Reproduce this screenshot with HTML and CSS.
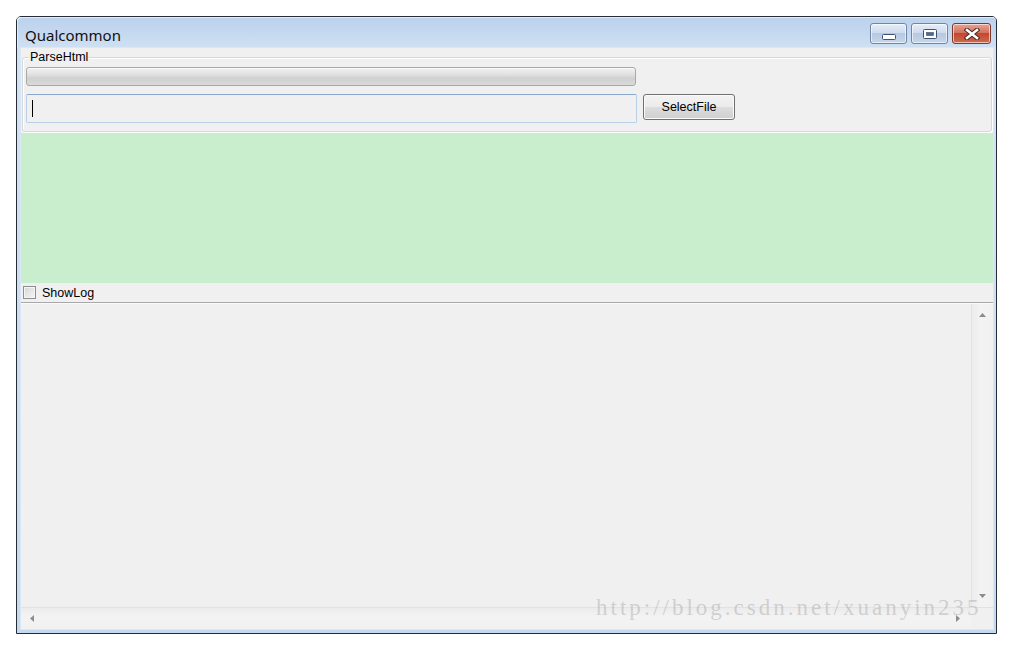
FILE: index.html
```html
<!DOCTYPE html>
<html>
<head>
<meta charset="utf-8">
<title>Qualcommon</title>
<link rel="stylesheet" href="styles.css">
</head>
<body>
<div class="window">
  <div class="titlebar">
    <span class="title">Qualcommon</span>
    <div class="caption-btns">
      <div class="cap cap-min">
        <svg width="14" height="6" viewBox="0 0 14 6"><rect x="0.5" y="0.5" width="13" height="5" rx="1" fill="#fff" stroke="#3d5272"/></svg>
      </div>
      <div class="cap cap-max">
        <svg width="14" height="10" viewBox="0 0 14 10"><rect x="0.5" y="0.5" width="13" height="9" rx="1" fill="#fff" stroke="#3d5272"/><rect x="3.5" y="3.5" width="7" height="3" fill="#50688a" stroke="#3d5272" stroke-width="0.6"/></svg>
      </div>
      <div class="cap cap-close">
        <svg width="16" height="12" viewBox="0 0 16 12"><path d="M3 2 L13 10 M13 2 L3 10" stroke="#4a2a25" stroke-width="4.6" stroke-linecap="square"/><path d="M3 2 L13 10 M13 2 L3 10" stroke="#fff" stroke-width="2.6" stroke-linecap="square"/></svg>
      </div>
    </div>
  </div>
  <div class="frame">
    <div class="client">
      <div class="group">
        <span class="group-label">ParseHtml</span>
        <div class="progress"></div>
        <div class="file-row">
          <div class="input"><span class="caret"></span></div>
          <button class="btn">SelectFile</button>
        </div>
      </div>
      <div class="green"></div>
      <div class="check-row">
        <span class="checkbox"></span>
        <span class="check-label">ShowLog</span>
      </div>
      <div class="log">
        <div class="log-main">
          <div class="log-text"></div>
          <div class="vscroll">
            <svg class="arrow" width="7" height="4" viewBox="0 0 7 4"><path d="M0 4 L3.5 0 L7 4 Z" fill="#8c8c8c"/></svg>
            <svg class="arrow" width="7" height="4" viewBox="0 0 7 4"><path d="M0 0 L7 0 L3.5 4 Z" fill="#8c8c8c"/></svg>
          </div>
        </div>
        <div class="hscroll-row">
          <div class="hscroll">
            <svg class="arrow" width="4" height="7" viewBox="0 0 4 7"><path d="M4 0 L4 7 L0 3.5 Z" fill="#8c8c8c"/></svg>
            <svg class="arrow" width="4" height="7" viewBox="0 0 4 7"><path d="M0 0 L4 3.5 L0 7 Z" fill="#8c8c8c"/></svg>
          </div>
          <div class="corner"></div>
        </div>
      </div>
    </div>
  </div>
</div>
<div class="watermark">http://blog.csdn.net/xuanyin235</div>
</body>
</html>
```

FILE: styles.css
```css
html, body {
  margin: 0;
  padding: 0;
  background: #ffffff;
}

body {
  width: 1017px;
  height: 649px;
  position: relative;
  overflow: hidden;
  font-family: "Liberation Sans", Arial, sans-serif;
}

.window {
  box-sizing: border-box;
  margin: 16px 0 0 16px;
  width: 981px;
  height: 618px;
  border: 1px solid #262c35;
  border-radius: 5px 5px 0 0;
  background: #c4d8ee;
  display: flex;
  flex-direction: column;
}

.titlebar {
  height: 31px;
  flex: none;
  display: flex;
  align-items: flex-start;
  justify-content: space-between;
  padding-left: 8px;
  border-radius: 4px 4px 0 0;
  background: linear-gradient(#bcd2ec, #c4d8ef 50%, #cfe0f2);
  box-shadow: inset 1px 1px 0 #e3edf8;
}

.title {
  font-family: "Noto Sans", "Open Sans", sans-serif;
  font-size: 15px;
  line-height: 20px;
  margin-top: 8px;
  color: #111111;
}

.caption-btns {
  display: flex;
  gap: 4px;
  margin-top: 6px;
  margin-right: 5px;
}

.cap {
  box-sizing: border-box;
  height: 21px;
  width: 37px;
  border: 1px solid #6f86a6;
  border-radius: 3px;
  display: flex;
  align-items: center;
  justify-content: center;
  background: linear-gradient(#e6eef8, #cfdcee 45%, #b6c9e2 50%, #c5d6ec);
  box-shadow: inset 0 0 0 1px rgba(255,255,255,0.6);
}

.cap-min svg { margin-top: 7px; }

.cap-close {
  width: 39px;
  border-color: #7a3a32;
  background: linear-gradient(#e8a493, #d4735f 45%, #c2482f 50%, #cf6a4f);
}

.frame {
  flex: 1;
  display: flex;
  padding: 0 3px 4px 4px;
  background: linear-gradient(#d4e3f3, #c6daef);
}

.client {
  flex: 1;
  display: flex;
  flex-direction: column;
  background: #f0f0f0;
  box-shadow: 0 0 0 1px #dbe7f4;
  font-size: 12.5px;
  color: #000000;
}

.group {
  position: relative;
  margin: 9px 1px 0 1px;
  height: 75px;
  box-sizing: border-box;
  border: 1px solid #d3dadf;
  border-radius: 3px;
  box-shadow: inset 1px 1px 0 #ffffff, 1px 1px 0 #ffffff;
  padding: 9px 3px 8px 3px;
  display: flex;
  flex-direction: column;
  gap: 8px;
}

.group-label {
  position: absolute;
  top: -8px;
  left: 6px;
  padding: 0 1px;
  line-height: 14px;
  font-size: 12.5px;
  background: #f0f0f0;
}

.progress {
  box-sizing: border-box;
  width: 610px;
  height: 19px;
  border: 1px solid #a9a9a9;
  border-radius: 3px;
  background: linear-gradient(#f2f2f2, #e0e0e0 40%, #d0d0d0 60%, #dadada);
  box-shadow: inset 0 1px 0 #fafafa;
}

.file-row {
  display: flex;
  align-items: flex-start;
  gap: 6px;
}

.input {
  box-sizing: border-box;
  width: 611px;
  height: 29px;
  border: 1px solid #b9d0e7;
  border-top-color: #88a9cd;
  border-radius: 2px;
  background: #f0f0f0;
  display: flex;
  align-items: center;
  padding-left: 5px;
}

.caret {
  width: 1px;
  height: 17px;
  background: #000000;
}

.btn {
  box-sizing: border-box;
  width: 92px;
  height: 26px;
  margin: 0;
  padding: 0;
  border: 1px solid #707070;
  border-radius: 3px;
  font-family: "Liberation Sans", Arial, sans-serif;
  font-size: 12.5px;
  color: #000000;
  background: linear-gradient(#f3f3f3, #ebebeb 48%, #dddddd 52%, #cfcfcf);
  box-shadow: inset 0 0 0 1px #fbfbfb;
}

.green {
  margin-top: 1px;
  height: 150px;
  flex: none;
  background: #c8eecd;
}

.check-row {
  flex: none;
  height: 19px;
  display: flex;
  align-items: center;
  padding-left: 2px;
  gap: 6px;
  border-bottom: 1px solid #a8a8a8;
}

.checkbox {
  box-sizing: border-box;
  width: 13px;
  height: 13px;
  border: 1px solid #8e8f8f;
  background: linear-gradient(135deg, #d6d6d6, #f6f6f6);
  box-shadow: inset 0 0 0 1px #f4f4f4;
}

.check-label {
  line-height: 14px;
}

.log {
  flex: 1;
  display: flex;
  flex-direction: column;
  border-top: 1px solid #fafafa;
}

.log-main {
  flex: 1;
  display: flex;
}

.log-text {
  flex: 1;
}

.vscroll {
  width: 21px;
  border-left: 1px solid #e4e4e4;
  background: linear-gradient(90deg, #ececec, #f3f3f3 40%, #f1f1f1);
  display: flex;
  flex-direction: column;
  align-items: center;
  justify-content: space-between;
  padding: 9px 0 9px 0;
}

.hscroll-row {
  flex: none;
  height: 21px;
  display: flex;
  border-top: 1px solid #e2e2e2;
}

.hscroll {
  flex: 1;
  display: flex;
  align-items: center;
  justify-content: space-between;
  padding: 0 11px 0 9px;
  background: linear-gradient(#ececec, #f3f3f3 40%, #f1f1f1);
}

.corner {
  width: 22px;
  background: #f0f0f0;
}

.arrow {
  display: block;
}

.watermark {
  position: absolute;
  left: 596px;
  top: 596px;
  font-family: "Liberation Serif", "DejaVu Serif", serif;
  font-size: 23px;
  line-height: 24px;
  letter-spacing: 3px;
  color: rgba(160, 160, 160, 0.42);
  white-space: nowrap;
}
```
